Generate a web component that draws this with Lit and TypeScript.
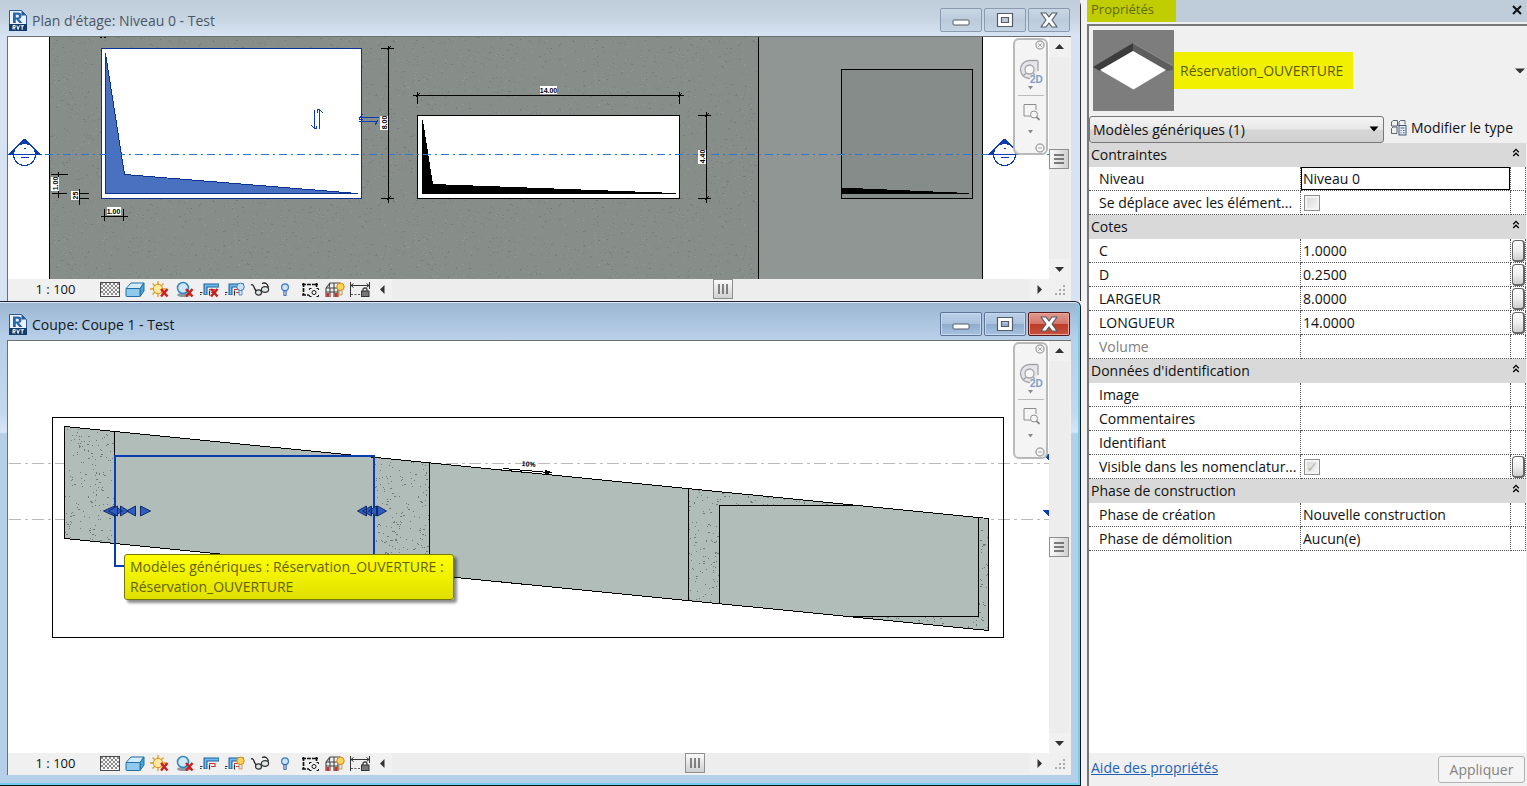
import { LitElement, html, svg, css, nothing } from "lit";
import { customElement, property } from "lit/decorators.js";

/* ---------- shared drawing helpers ---------- */

function rng(seed: number) {
  let s = seed;
  return () => {
    s = (s * 1664525 + 1013904223) % 4294967296;
    return s / 4294967296;
  };
}

function specks(seed: number, count: number, w: number, h: number) {
  const r = rng(seed);
  let d = "";
  for (let i = 0; i < count; i++) {
    const x = Math.floor(r() * w);
    const y = Math.floor(r() * h);
    d += r() > 0.8 ? `M${x} ${y}h2v1h-2z` : `M${x} ${y}h1v1h-1z`;
  }
  return d;
}

function checker(cols: number, rows: number) {
  let d = "";
  for (let y = 0; y < rows; y++)
    for (let x = y % 2; x < cols; x += 2) d += `M${1 + x * 2} ${2 + y * 2}h2v2h-2z`;
  return d;
}

const chevrons = html`<svg width="8" height="9" viewBox="0 0 8 9" fill="none" stroke="#000" stroke-width="1.3">
  <path d="M1.2 4.2 4 1.4l2.8 2.8M1.2 8 4 5.2 6.8 8" />
</svg>`;

const redCross = svg`<path d="M11 8l6.500 7.500M17.500 8l-6.500 7.500" stroke="#c8201c" stroke-width="2.400" fill="none"/>`;

const pipes = svg`
  <path d="M5.500 14V4.500H19" stroke="#1c5f9c" stroke-width="4" fill="none"/>
  <path d="M5.500 13.500V4.500h13" stroke="#6fbbee" stroke-width="1.800" fill="none"/>
  <path d="M0 11.500h2.500M0 13.500h1.500M9.500 14.500V9.500" stroke="#333" stroke-width="1.200" fill="none"/>
  <path d="M9 8.500h6M11 11.500h4v-3" stroke="#c33" stroke-width="1.200" fill="none"/>`;

const bulb = (fill: string, line: string) => svg`
  <circle cx="15.500" cy="5.800" r="3.700" fill=${fill} stroke=${line}/>
  <path d="M14 9.500h3v4.500h-3z" fill="#dce6f2" stroke=${line} stroke-width=".8"/>`;

const icons: Record<string, unknown> = {
  detail: svg`
    <rect x=".5" y="1.500" width="19" height="14" fill="#f6f6f6" stroke="#4a4a4a"/>
    <path d=${checker(9, 6)} fill="#8a8a8a"/>`,
  style: svg`
    <path d="M1 7.500 6 2h13l-4 5.500z" fill="#d3ecfb" stroke="#1f6fa8"/>
    <path d="M15 7.500 19 2v8l-4 5.500z" fill="#4e9fd2" stroke="#1f6fa8"/>
    <rect x="1" y="7.500" width="14" height="8" rx="1" fill="#8fcaec" stroke="#1f6fa8"/>`,
  sun: svg`
    <path d="M8 0v16M0 8h16M2.500 2.500l11 11M13.500 2.500l-11 11" stroke="#dd9c22" stroke-width="1.300"/>
    <circle cx="8" cy="8" r="4.700" fill="#ffe9a0" stroke="#d8921c"/>${redCross}`,
  shadow: svg`
    <ellipse cx="9" cy="14" rx="7" ry="2" fill="#8d979f"/>
    <circle cx="8" cy="7" r="5.500" fill="#cfe8f8" stroke="#2f86bd" stroke-width="1.500"/>${redCross}`,
  cropOff: svg`${pipes}${redCross}`,
  crop: pipes,
  cropHidden: svg`${pipes}${bulb("#cfe3fb", "#3a78c4")}`,
  cropShown: svg`${pipes}${bulb("#ffd257", "#d08a18")}`,
  glasses: svg`
    <path d="M1 4q2-1 3 2t3 5M12 2.500q5-2 6.500 4" fill="none" stroke="#222" stroke-width="1.300"/>
    <ellipse cx="8.500" cy="11.500" rx="3" ry="2.600" fill="#dde6e8" stroke="#333" stroke-width="1.200"/>
    <ellipse cx="15" cy="8.500" rx="3.600" ry="2.800" fill="#dde6e8" stroke="#333" stroke-width="1.200"/>`,
  reveal: svg`
    <circle cx="10" cy="6.200" r="3.400" fill="#cfe3fb" stroke="#3a78c4" stroke-width="1.200"/>
    <path d="M8.800 9.800h2.400v4.700H8.800z" fill="#b9cbe8" stroke="#3a66a8" stroke-width=".9"/>`,
  temp: svg`
    <path d="M2 3.500h16M3.500 2v12.500M2 14h7M16.500 2v4" stroke="#111" stroke-width="1.700" stroke-dasharray="4 1" fill="none"/>
    <circle cx="14" cy="11.500" r="2" fill="#fff" stroke="#111"/>
    <path d="M9.500 9V7.500h2M16.500 7.500h2V9M9.500 14v1.500h2M16.500 15.500h2V14" stroke="#111" fill="none"/>`,
  worksharing: svg`
    <path d="M1 7 5 2h10l3 5M1 7h12v9M1 7v9M5 2l-1 5M9 2v14M13 3v5M5 7v9M1 11h12" fill="none" stroke="#444" stroke-width="1.100"/>
    <path d="M1.500 12h2.500v4H1.500zM9.500 12h3v4h-3z" fill="#c4332b"/>${bulb("#ffd257", "#d08a18")}`,
  constraints: svg`
    <path d="M.5 1v15M19.500 1v7M1 4.500h18M3.500 2.500 1 4.500l2.500 2M16.500 2.500l2.500 2-2.500 2" fill="none" stroke="#333"/>
    <path d="M1 13.500h9" stroke="#555" stroke-dasharray="2 1.500"/>
    <path d="M13 10V9q0-2 2-2t2 2v1" fill="none" stroke="#444" stroke-width="1.300"/>
    <rect x="11.500" y="10" width="7.500" height="5.500" fill="#777" stroke="#333"/>`,
};

const labels: Record<string, string> = {
  detail: "Niveau de détail",
  style: "Style visuel",
  sun: "Trajectoire du soleil",
  shadow: "Ombres",
  cropOff: "Vue non cadrée",
  crop: "Vue cadrée",
  cropHidden: "Zone cadrée masquée",
  cropShown: "Zone cadrée affichée",
  glasses: "Masquage temporaire",
  reveal: "Afficher les éléments cachés",
  temp: "Propriétés de vue temporaires",
  worksharing: "Modèle analytique",
  constraints: "Afficher les contraintes",
};

const arrow = (dir: "up" | "down" | "left" | "right") => {
  const d = {
    up: "M1 7 5.500 2 10 7z",
    down: "M1 3h9L5.500 8z",
    left: "M7.500 1v9L3 5.500z",
    right: "M3.500 1v9L8 5.500z",
  }[dir];
  return html`<svg width="11" height="11" viewBox="0 0 11 11"><path d=${d} fill="#333" /></svg>`;
};

/* ---------- scroll bar ---------- */

@customElement("scroll-bar")
export class ScrollBar extends LitElement {
  @property({ type: Boolean, reflect: true }) vertical = false;
  @property({ type: Number }) position = 0.5;

  static styles = css`
    :host { display: flex; background: #ededed; }
    :host([vertical]) { flex-direction: column; }
    button { border: 0; padding: 0; background: #f1f1f1; flex: 0 0 20px; display: grid; place-items: center; }
    .track { display: flex; flex: 1; min-width: 0; min-height: 0; }
    :host([vertical]) .track { flex-direction: column; }
    .thumb {
      flex: 0 0 20px;
      box-sizing: border-box;
      border: 1px solid #8e8e8e;
      background: linear-gradient(#fafafa, #d0d0d0);
      display: grid;
      place-items: center;
    }
    :host([vertical]) .thumb { background: linear-gradient(90deg, #fafafa, #d0d0d0); }
  `;

  render() {
    return html`
      <button aria-label="Défiler en arrière">${arrow(this.vertical ? "up" : "left")}</button>
      <div class="track" role="scrollbar" aria-valuenow=${Math.round(this.position * 100)}
        aria-orientation=${this.vertical ? "vertical" : "horizontal"}>
        <div style="flex-grow:${this.position}"></div>
        <div class="thumb">
          <svg width="12" height="12" viewBox="0 0 12 12" stroke="#555" stroke-width="1.400">
            <path d=${this.vertical ? "M1 2h10M1 6h10M1 10h10" : "M2 1v10M6 1v10M10 1v10"} />
          </svg>
        </div>
        <div style="flex-grow:${1 - this.position}"></div>
      </div>
      <button aria-label="Défiler en avant">${arrow(this.vertical ? "down" : "right")}</button>
    `;
  }
}

/* ---------- navigation bar ---------- */

@customElement("nav-bar")
export class NavBar extends LitElement {
  static styles = css`
    :host {
      display: flex;
      flex-direction: column;
      align-items: center;
      box-sizing: border-box;
      width: 35px;
      border: 2px solid #b9b9b9;
      border-radius: 6px;
      background: rgba(243, 243, 243, 0.9);
    }
    button { border: 0; padding: 0; background: none; display: block; line-height: 0; }
    .end { align-self: flex-end; margin-right: 1px; }
    .wheel { margin-top: 8px; }
    .zoom { margin-top: 6px; }
    .rule { width: 26px; height: 1px; background: #bbb; margin-top: 4px; }
    .caret { margin-top: 2px; }
    .last { margin-top: 8px; }
    text { font: bold 10px "Liberation Sans", sans-serif; fill: #7d9cc4; }
  `;

  render() {
    const caret = html`<svg width="7" height="5" viewBox="0 0 7 5"><path d="M1 0h5L3.500 3.500z" fill="#888" /></svg>`;
    return html`
      <button class="end" aria-label="Fermer la barre">
        <svg width="10" height="10" viewBox="0 0 10 10" fill="none" stroke="#aaa"><circle cx="5" cy="5" r="4" stroke-width="1.500" /><path d="M3.200 3.200l3.600 3.600M6.800 3.200 3.200 6.800" /></svg>
      </button>
      <button class="wheel" aria-label="Disque de navigation 2D">
        <svg width="26" height="26" viewBox="0 0 26 26" fill="none" stroke="#a3a3ac" stroke-width="1.300">
          <path d="M12 20.500A9 9 0 1 1 11 2.500h8q1 0 1 1V13" fill="#e6e6ea" />
          <circle cx="11.500" cy="11.500" r="4.500" fill="#f7f7f7" /><path d="M8 15l-3 3M15 15l2 2" />
          <text x="12" y="24.500" stroke="none">2D</text>
        </svg>
      </button>
      <button class="caret" aria-label="Options du disque">${caret}</button>
      <div class="rule"></div>
      <button class="zoom" aria-label="Zoom sur une région">
        <svg width="20" height="20" viewBox="0 0 20 20" fill="none" stroke="#8e8e8e">
          <path d="M15 8V2.500H3V14h7" /><circle cx="13" cy="12.500" r="3.500" fill="#f7f7f7" /><path d="M15.500 15l3 3" stroke-width="1.800" />
        </svg>
      </button>
      <button class="caret last" aria-label="Options de zoom">${caret}</button>
      <button class="end last" aria-label="Personnaliser">
        <svg width="10" height="10" viewBox="0 0 10 10" fill="none" stroke="#aaa"><circle cx="5" cy="5" r="4" stroke-width="1.500" /><path d="M3 5h4" /></svg>
      </button>
    `;
  }
}

/* ---------- document window ---------- */

@customElement("view-window")
export class ViewWindow extends LitElement {
  @property() heading = "";
  @property({ type: Boolean, reflect: true }) active = false;
  @property({ attribute: false }) tools: string[] = [];
  @property({ type: Number }) scrollX = 0.5;
  @property({ type: Number }) scrollY = 0.5;

  static styles = css`
    :host {
      display: flex;
      flex-direction: column;
      box-sizing: border-box;
      padding: 0 9px 0 7px;
      background: #d6e3f2;
      border-right: 1px solid #333;
      border-top-right-radius: 6px;
    }
    :host([active]) {
      padding-bottom: 10px;
      background: linear-gradient(#9cb6d2, #b7cfe9 36px, #c3d8ee 110px, #d6e5f6 130px, #b5cfe8 132px);
      border-top: 1px solid #223;
      border-right: 1px solid #111;
      border-bottom: 1px solid #111;
      box-shadow: inset 0 1px 0 #dbe8f5, inset -2px -2px 0 #6fd0ee;
    }
    .title {
      display: flex;
      align-items: center;
      gap: 5px;
      height: 36px;
      box-sizing: border-box;
      padding: 4px 10px 0 9px;
      margin: 0 -9px 0 -7px;
      background: linear-gradient(#bfcddb, #c6d4e2 50%, #d6e4f3);
      color: #4c5763;
      font-size: 14px;
    }
    :host([active]) .title { background: none; height: 38px; padding-top: 6px; color: #101820; }
    .title h2 { font: inherit; margin: 0; flex: 1; white-space: nowrap; }
    .controls { display: flex; gap: 2px; }
    .controls button {
      width: 42px;
      height: 24px;
      padding: 0;
      border: 1px solid #8a9bb0;
      border-radius: 2px;
      background: linear-gradient(#c8d6e5, #bccbdc 50%, #c5d4e4);
      display: grid;
      place-items: center;
    }
    :host([active]) .controls button {
      border-color: #5c7595;
      background: linear-gradient(#bcd0e8, #a9c2de 50%, #8fabcd 51%, #a7c2e0);
      box-shadow: inset 0 0 0 1px #c6d9ee;
    }
    :host([active]) .controls .close {
      border-color: #5a1717;
      background: linear-gradient(#e19b8f, #d27467 50%, #bc3a26 51%, #c8523f);
      box-shadow: inset 0 0 0 1px #e5a79c;
    }
    .body {
      flex: 1;
      display: grid;
      grid-template-columns: minmax(0, 1fr) 22px;
      grid-template-rows: minmax(0, 1fr) 22px;
      border-top: 1px solid #6f6f6f;
      border-left: 1px solid #6f6f6f;
      background: #f0f0f0;
    }
    .canvas { position: relative; display: flex; background: #fff; overflow: hidden; }
    nav-bar { position: absolute; right: 1px; top: 1px; }
    .body > scroll-bar { margin-right: 2px; }
    .bar { display: flex; align-items: stretch; font-size: 13px; padding-bottom: 2px; }
    .scale { border: 0; background: none; font: inherit; line-height: 20px; color: #111; width: 89px; text-align: center; padding: 0 0 0 6px; }
    .tool { border: 0; background: none; padding: 0; width: 25px; display: grid; place-items: center; }
    .bar scroll-bar { flex: 1; min-width: 0; }
    .grip { display: grid; place-items: center; }
  `;

  render() {
    return html`
      <div class="title">
        <svg width="18" height="21" viewBox="0 0 18 21">
          <path d="M.5.500h12l5 5V20H.5z" fill="#eaf2fb" stroke="#2c5a94" />
          <path d="M12.500.500v5h5z" fill="#2c5a94" />
          <path d="M4 13V2.500h5q3.500 0 3.500 3T10 9l3.500 4h-3.200L7.500 9.500H6.800V13zM6.800 4.800V7.500h2q1.200 0 1.200-1.300T8.800 4.800z" fill="#2a66ad" />
          <rect x="0" y="14" width="18" height="7" fill="#123a6b" />
          <path d="M4 19.500v-4h2.200v2H4l2.400 2M7.800 15.500l1.300 4 1.300-4M11.500 15.800h3.500M13.200 15.800v4" fill="none" stroke="#fff" />
        </svg>
        <h2>${this.heading}</h2>
        <div class="controls">
          <button aria-label="Réduire">
            <svg width="18" height="16" viewBox="0 0 18 16"><rect x="1" y="8" width="16" height="5" rx="1" fill="#fff" stroke="#555c66" /></svg>
          </button>
          <button aria-label="Agrandir">
            <svg width="18" height="16" viewBox="0 0 18 16">
              <path d="M1.500 1.500h15v13h-15zM5.500 5.500v5h7v-5z" fill="#fff" stroke="#555c66" stroke-width="1.200" fill-rule="evenodd" />
            </svg>
          </button>
          <button class="close" aria-label="Fermer">
            <svg width="18" height="16" viewBox="0 0 18 16">
              <path d="M1 1h5l3 4 3-4h5l-5 7 5 7h-5l-3-4-3 4H1l5-7z" fill="#fff" stroke="#555c66" stroke-width="1.200" stroke-linejoin="round" />
            </svg>
          </button>
        </div>
      </div>
      <div class="body">
        <div class="canvas"><slot></slot><nav-bar></nav-bar></div>
        <scroll-bar vertical .position=${this.scrollY}></scroll-bar>
        <div class="bar">
          <button class="scale">1 : 100</button>
          ${this.tools.map(
            (t) => html`<button class="tool" aria-label=${labels[t]}>
              <svg width="20" height="17" viewBox="0 0 20 17">${icons[t]}</svg>
            </button>`
          )}
          <scroll-bar .position=${this.scrollX}></scroll-bar>
        </div>
        <div class="grip">
          <svg width="12" height="12" viewBox="0 0 12 12" fill="#aaa">
            <path d="M9 1h2v2H9zM9 5h2v2H9zM9 9h2v2H9zM5 5h2v2H5zM5 9h2v2H5zM1 9h2v2H1z" />
          </svg>
        </div>
      </div>
    `;
  }
}

/* ---------- properties palette ---------- */

type Row = { name: string; value?: string; check?: boolean; on?: boolean; off?: boolean; more?: boolean; focus?: boolean };
type Group = { title: string; rows: Row[] };

const groups: Group[] = [
  { title: "Contraintes", rows: [{ name: "Niveau", value: "Niveau 0", focus: true }, { name: "Se déplace avec les élément...", check: true }] },
  {
    title: "Cotes",
    rows: [
      { name: "C", value: "1.0000", more: true },
      { name: "D", value: "0.2500", more: true },
      { name: "LARGEUR", value: "8.0000", more: true },
      { name: "LONGUEUR", value: "14.0000", more: true },
      { name: "Volume", value: "", off: true },
    ],
  },
  {
    title: "Données d'identification",
    rows: [
      { name: "Image", value: "" },
      { name: "Commentaires", value: "" },
      { name: "Identifiant", value: "" },
      { name: "Visible dans les nomenclatur...", check: true, on: true, more: true },
    ],
  },
  { title: "Phase de construction", rows: [{ name: "Phase de création", value: "Nouvelle construction" }, { name: "Phase de démolition", value: "Aucun(e)" }] },
];

@customElement("properties-palette")
export class PropertiesPalette extends LitElement {
  static styles = css`
    :host { display: flex; flex-direction: column; background: #f0f0f0; color: #111; font-size: 14px; }
    button, input, select { font: inherit; color: inherit; }
    .head { display: flex; align-items: stretch; height: 22px; background: #bfcddb; margin-bottom: 2px; }
    .head h2 { margin: 0; font-size: 13px; font-weight: 400; line-height: 18px; width: 85px; padding-left: 4px; background: #c0cd00; color: #5f6a10; }
    .head button { margin-left: auto; border: 0; background: none; padding: 0 5px 2px; display: grid; place-items: center; }
    .content { flex: 1; display: flex; flex-direction: column; border-top: 2px solid #777; border-left: 2px solid #777; padding-right: 1px; min-height: 0; }
    .type { display: flex; align-items: center; height: 89px; padding-left: 4px; }
    .type span { background: #f0f000; color: #5a5a08; line-height: 37px; padding: 0 10px 0 6px; }
    .type button { margin-left: auto; border: 0; background: none; padding: 0; display: grid; }
    .filter { display: flex; align-items: center; height: 28px; gap: 6px; }
    .combo { flex: 1; position: relative; display: grid; align-items: center; }
    .combo select {
      appearance: none;
      width: 100%;
      height: 27px;
      border: 1px solid #777;
      border-radius: 3px;
      background: linear-gradient(#f4f4f4, #e8e8e8 48%, #d6d6d6 52%, #d0d0d0);
      padding: 0 3px;
    }
    .combo svg { position: absolute; right: 5px; pointer-events: none; }
    .edit { border: 0; background: none; padding: 0; width: 136px; display: flex; align-items: center; gap: 4px; height: 28px; padding-bottom: 3px; white-space: nowrap; }
    .grid { flex: 1; background: #fff; }
    table { width: 100%; table-layout: fixed; border-collapse: separate; border-spacing: 0; }
    .c1 { width: 212px; }
    .c3 { width: 15px; }
    th, td { padding: 0; font-weight: 400; text-align: left; height: 23px; line-height: 23px; border-bottom: 1px dotted #555; border-right: 1px dotted #555; white-space: nowrap; }
    .group { border-right: 0; border-bottom: 0; height: 24px; background: #d9d9d9; }
    .group button { width: 100%; height: 24px; border: 0; background: none; padding: 0 6px 0 2px; display: flex; justify-content: space-between; line-height: 24px; }
    .group svg { margin-top: 5px; }
    .name { padding-left: 10px; overflow: hidden; }
    .off { color: #808080; }
    .text { display: block; box-sizing: border-box; width: 100%; height: 23px; border: 0; background: none; padding: 0 2px; outline: 0; }
    .focus { border: 1px solid #000; padding: 0 1px; }
    .tick { appearance: none; display: grid; place-items: center; box-sizing: border-box; width: 16px; height: 16px; margin: 0 3px; border: 1px solid #8e8e8e; background: linear-gradient(135deg, #d4d4d4, #fafafa); box-shadow: inset 0 0 0 2px #f4f4f4; }
    .tick:checked::before { content: "✓"; font: bold 14px/14px "DejaVu Sans", sans-serif; color: #b5b5b5; }
    .more { display: block; box-sizing: border-box; width: 13px; height: 22px; margin: 0 0 0 1px; padding: 0; border: 1px solid #666; border-right-width: 2px; border-bottom-width: 2px; border-radius: 4px; background: linear-gradient(#fff, #eee 50%, #cfcfcf); }
    .foot { display: flex; justify-content: space-between; align-items: center; height: 33px; padding: 0 1px 0 2px; }
    .foot a { color: #1b62b8; line-height: 20px; margin-bottom: 4px; }
    .foot button { height: 27px; width: 87px; padding: 0; border: 1px solid #b4b4b4; border-radius: 3px; background: #f4f4f4; color: #838383; }
  `;

  private row(r: Row) {
    return html`<tr>
      <td class="name ${r.off ? "off" : ""}">${r.name}</td>
      <td>
        ${r.check
          ? html`<input class="tick" type="checkbox" aria-label=${r.name} .checked=${!!r.on} ?disabled=${!!r.on} />`
          : html`<input class="text ${r.focus ? "focus" : ""}" type="text" aria-label=${r.name} .value=${r.value ?? ""} ?disabled=${!!r.off} />`}
      </td>
      <td>${r.more ? html`<button class="more" aria-label="Associer ${r.name}"></button>` : nothing}</td>
    </tr>`;
  }

  render() {
    return html`
      <div class="head">
        <h2>Propriétés</h2>
        <button aria-label="Fermer">
          <svg width="10" height="10" viewBox="0 0 10 10" stroke="#111" stroke-width="2"><path d="M1 1l8 8M9 1 1 9" /></svg>
        </button>
      </div>
      <div class="content">
        <div class="type">
          <svg width="81" height="81" viewBox="0 0 81 81">
            <rect width="81" height="81" fill="#7d7d7d" />
            <path d="M40 13 80 36v4l-7 1-33-20z" fill="#5e5e5e" /><path d="M40 13 0 37l7 4 33-20z" fill="#3c3c3c" />
            <path d="M40 13 80 36" stroke="#8c8c8c" />
            <path d="M40 21 73 40 40.500 59.500 7 40z" fill="#fff" />
          </svg>
          <span>Réservation_OUVERTURE</span>
          <button aria-label="Choisir un type"><svg width="12" height="8" viewBox="0 0 12 8"><path d="M1 1.500h10L6 6.500z" fill="#333" /></svg></button>
        </div>
        <div class="filter">
          <div class="combo">
            <select aria-label="Filtre de propriétés"><option>Modèles génériques (1)</option></select>
            <svg width="10" height="8" viewBox="0 0 10 8"><path d="M.5 1.500h9L5 6.500z" /></svg>
          </div>
          <button class="edit">
            <svg width="17" height="17" viewBox="0 0 17 17" fill="none" stroke="#5b6470">
              <path d="M1.500 3 3 1.500h4.500V7H1.500zM9 7V3l1.500-1.500H15V5.500M1.500 9.500 3 8h4v6.500H1.500z" />
              <rect x="9" y="6.500" width="7" height="9.500" fill="#e8f0fa" stroke="#3d5878" /><path d="M10.500 9h4M10.500 11.500h1M13 11.500h1.500M10.500 13.800h1M13 13.800h1.500" stroke="#3d5878" />
            </svg>
            Modifier le type
          </button>
        </div>
        <div class="grid">
          <table>
            <colgroup><col class="c1" /><col /><col class="c3" /></colgroup>
            ${groups.map(
              (g) => html`<tbody>
                <tr><th class="group" colspan="3"><button>${g.title}${chevrons}</button></th></tr>
                ${g.rows.map((r) => this.row(r))}
              </tbody>`
            )}
          </table>
        </div>
        <div class="foot">
          <a href="#aide">Aide des propriétés</a>
          <button disabled>Appliquer</button>
        </div>
      </div>
    `;
  }
}

/* ---------- application ---------- */

const marker = (x: number) => svg`
  <path d="M${x - 17} 154 ${x} 138 ${x + 17} 154z" fill="#0a3cb4"/>
  <circle cx=${x} cy="154" r="11" fill="#fff" stroke="#0a3cb4"/>
  <path d="M${x - 17} 154H${x + 17}M${x - 1} 148h2M${x - 4} 157h8" stroke="#0a3cb4"/>`;

const tag = (x: number, y: number, w: number, label: string, vertical = false) => svg`
  <g transform="translate(${x} ${y})${vertical ? " rotate(-90)" : ""}">
    <rect x=${-w / 2} y="-4" width=${w} height="8" fill="#fff"/>
    <text class="dim" y="3">${label}</text>
  </g>`;

@customElement("app-root")
export class AppRoot extends LitElement {
  static styles = css`
    :host {
      display: flex;
      height: 100vh;
      min-height: 640px;
      background: #f0f0f0;
      font-family: "Open Sans", "Noto Sans", sans-serif;
    }
    .desk { flex: 1; min-width: 0; display: flex; flex-direction: column; }
    .coupe { flex: 1; min-height: 0; }
    .split { width: 6px; background: #f2f2f2; }
    properties-palette { width: 440px; }
    .drawing { display: block; flex: 1; min-width: 0; }
    .ink { fill: none; stroke: #000; }
    .dim { font: bold 7px "Liberation Sans", sans-serif; text-anchor: middle; }
    .tip {
      position: absolute;
      left: 116px;
      top: 213px;
      box-sizing: border-box;
      width: 330px;
      padding: 2px 0 2px 5px;
      border: 1px solid #77770c;
      border-radius: 3px;
      background: linear-gradient(#ffff00, #e0e000);
      box-shadow: 3px 3px 3px rgba(0, 0, 0, 0.45);
      color: #62620a;
      font-size: 14px;
      line-height: 20px;
      white-space: nowrap;
    }
  `;

  private plan() {
    return html`<svg class="drawing" height="242" role="img" aria-label="Plan d'étage">
      <defs>
        <pattern id="rough" x=".5" y=".5" width="180" height="160" patternUnits="userSpaceOnUse">
          <rect width="180" height="160" fill="#878e8a" />
          <path d=${specks(7, 500, 180, 160)} fill="#767d7a" /><path d=${specks(31, 500, 180, 160)} fill="#8f9693" />
        </pattern>
      </defs>
      <g transform="translate(-7.500 -36.500)" shape-rendering="crispEdges">
        <rect x="49" y="30" width="709" height="260" fill="url(#rough)" />
        <rect x="758" y="30" width="224" height="260" fill="#8f9693" />
        <path class="ink" d="M49 30v260M758 30v260M982 30v260M99 37h2M103 37h2" />
        <rect x="841" y="69" width="131" height="129" fill="#868c89" stroke="#000" />
        <rect x="101" y="48" width="260" height="150" fill="#fff" stroke="#0a3296" />
        <rect x="417" y="115" width="262" height="83" fill="#fff" stroke="#000" />
        <path d="M841 188h10l117 5H841z" stroke="#000" />
        <path d="M422 120 432 184 675 193H422z" stroke="#000" />
        <path d="M105 53 124 174 357 193H105z" fill="#4a70c0" stroke="#0a3296" />
        <path d="M8 154H1049" stroke="#2b78cc" stroke-dasharray="8 4 2 4" />
        <path class="ink" d="M388 45v157M380 48h13M380 198h13M386 50l4-4M386 200l4-4
          M412 95h271M417 91v12M679 91v12M415 97l4-4M677 97l4-4
          M706 111v91M697 115h13M697 198h13M704 117l4-4M704 200l4-4
          M58 171v26M50 174h17M51 193h15M79 188v16M72 193h16M72 198h16
          M100 216h27M104 208v12M123 208v12" />
        ${tag(548, 89, 17, "14.00")} ${tag(383, 122, 14, "8.00", true)} ${tag(701, 156, 14, "4.40", true)}
        ${tag(54, 183, 14, "1.00", true)} ${tag(74, 195, 9, "25", true)} ${tag(113, 210, 14, "1.00")}
        <path d="M314 109v19l-3-3M314 128h2v-3M319 128v-19l4 4M319 109h-2v3M378 117h-19l3-3M359 117v2h3M358 121h19l-3 4M377 121v-2" fill="none" stroke="#0a3cb4" />
        ${marker(24)} ${marker(1004)}
      </g>
    </svg>`;
  }

  private section() {
    const body = "M64 426 988 518V630L64 538z";
    const plain = "#b1bdb9";
    return html`<svg class="drawing" role="img" aria-label="Coupe">
      <defs>
        <pattern id="grain" x=".5" y=".5" width="110" height="130" patternUnits="userSpaceOnUse">
          <rect width="110" height="130" fill="#b1bdb9" /><path d=${specks(91, 420, 110, 130)} fill="#6f7a78" />
        </pattern>
      </defs>
      <g transform="translate(-7.500 -340.500)" shape-rendering="crispEdges">
        <path d="M8 463H1049M8 519H1049" stroke="#bbb" stroke-dasharray="12 4 3 4" />
        <path d=${body} fill="url(#grain)" />
        <path d="M114 431 374 457V569L114 543z" fill=${plain} />
        <path d="M429 462 688 488V600L429 574z" fill=${plain} />
        <path d="M719 505H858L978 517V616H847L719 603z" fill=${plain} />
        <path class="ink" d="M719 603V505H855M978 517V616H847M429 462V574M688 488V600M114 431v24" />
        <path class="ink" d=${body} />
        <rect class="ink" x="52" y="417" width="951" height="220" />
        <path d="M114.500 455.500H373.500V565.500H114.500z" fill="none" stroke="#0a3cb4" stroke-width="2" />
        <g fill="#2f5cc0" stroke="#122c6b" shape-rendering="auto">
          <path d="M150 510.500l-10-5v10zM126 510.500l9-5v10zM128 510.500l-8-5v10zM122 510.500l-8-5v10zM103 510.500l11-5v10z" />
          <path d="M108 510.500l9-5v10zM357 510.500l9-5v10zM362 510.500l9-5v10zM368 510.500l8-5v10zM386 510.500l-9-5v10z" />
        </g>
        <path class="ink" d="M503 468 548 472" /><path d="M552 472l-8-3v5z" />
        <text class="dim" transform="translate(528 466) rotate(5)" shape-rendering="auto">10%</text>
        <path d="M1041 453h9v8zM1041 509h9v8z" fill="#0a3cb4" />
      </g>
    </svg>`;
  }

  render() {
    const common = ["glasses", "reveal", "temp", "worksharing", "constraints"];
    return html`
      <main class="desk">
        <view-window heading="Plan d'étage: Niveau 0 - Test" .scrollX=${0.52} .scrollY=${0.506}
          .tools=${["detail", "style", "sun", "shadow", "cropOff", "cropHidden", ...common]}>
          ${this.plan()}
        </view-window>
        <view-window class="coupe" active heading="Coupe: Coupe 1 - Test" .scrollX=${0.475} .scrollY=${0.5}
          .tools=${["detail", "style", "sun", "shadow", "crop", "cropShown", ...common]}>
          ${this.section()}
          <div class="tip" role="tooltip">Modèles génériques : Réservation_OUVERTURE :<br />Réservation_OUVERTURE</div>
        </view-window>
      </main>
      <div class="split"></div>
      <properties-palette></properties-palette>
    `;
  }
}
